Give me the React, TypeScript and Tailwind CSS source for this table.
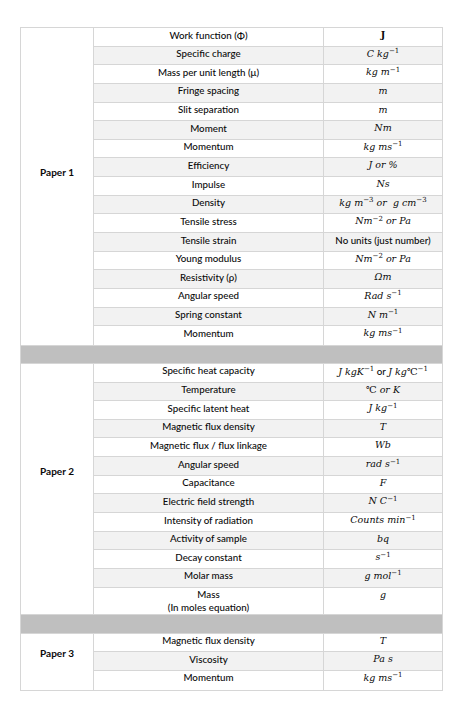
import React from "react";

type Row = { name: React.ReactNode; unit: React.ReactNode; tall?: boolean };

const M = ({ children }: { children: React.ReactNode }) => (
    <span className="font-['DejaVu_Serif',serif] italic">{children}</span>
);

const S = ({ children }: { children: React.ReactNode }) => (
    <sup className="text-[7px] not-italic font-['DejaVu_Serif',serif]">{children}</sup>
);

const paper1: Row[] = [
    { name: "Work function (Φ)", unit: <span className="font-['DejaVu_Serif',serif] font-bold">J</span> },
    { name: "Specific charge", unit: <M>C kg<S>−1</S></M> },
    { name: "Mass per unit length (μ)", unit: <M>kg m<S>−1</S></M> },
    { name: "Fringe spacing", unit: <M>m</M> },
    { name: "Slit separation", unit: <M>m</M> },
    { name: "Moment", unit: <M>Nm</M> },
    { name: "Momentum", unit: <M>kg ms<S>−1</S></M> },
    { name: "Efficiency", unit: <M>J or %</M> },
    { name: "Impulse", unit: <M>Ns</M> },
    { name: "Density", unit: <M>kg m<S>−3</S> or&nbsp; g cm<S>−3</S></M> },
    { name: "Tensile stress", unit: <M>Nm<S>−2</S> or Pa</M> },
    { name: "Tensile strain", unit: <span className="font-['Lato',sans-serif] font-medium text-[9.75px]">No units (just number)</span> },
    { name: "Young modulus", unit: <M>Nm<S>−2</S> or Pa</M> },
    { name: "Resistivity (ρ)", unit: <M>Ωm</M> },
    { name: "Angular speed", unit: <M>Rad s<S>−1</S></M> },
    { name: "Spring constant", unit: <M>N m<S>−1</S></M> },
    { name: "Momentum", unit: <M>kg ms<S>−1</S></M> },
];

const paper2: Row[] = [
    {
        name: "Specific heat capacity",
        unit: (
            <span>
                <M>J kgK<S>−1</S></M> <span className="font-['Lato',sans-serif] font-medium text-[9.75px]">or</span> <M>J kg</M>
                <span className="font-['DejaVu_Serif',serif]">℃<S>−1</S></span>
            </span>
        ),
    },
    {
        name: "Temperature",
        unit: (
            <span>
                <span className="font-['DejaVu_Serif',serif]">℃ </span>
                <M>or K</M>
            </span>
        ),
    },
    { name: "Specific latent heat", unit: <M>J kg<S>−1</S></M> },
    { name: "Magnetic flux density", unit: <M>T</M> },
    { name: "Magnetic flux / flux linkage", unit: <M>Wb</M> },
    { name: "Angular speed", unit: <M>rad s<S>−1</S></M> },
    { name: "Capacitance", unit: <M>F</M> },
    { name: "Electric field strength", unit: <M>N C<S>−1</S></M> },
    { name: "Intensity of radiation", unit: <M>Counts min<S>−1</S></M> },
    { name: "Activity of sample", unit: <M>bq</M> },
    { name: "Decay constant", unit: <M>s<S>−1</S></M> },
    { name: "Molar mass", unit: <M>g mol<S>−1</S></M> },
    {
        name: (
            <>
                Mass
                <br />
                (In moles equation)
            </>
        ),
        unit: <M>g</M>,
        tall: true,
    },
];

const paper3: Row[] = [
    { name: "Magnetic flux density", unit: <M>T</M> },
    { name: "Viscosity", unit: <M>Pa s</M> },
    { name: "Momentum", unit: <M>kg ms<S>−1</S></M> },
];

function Section({ label, rows, pad }: { label: string; rows: Row[]; pad: string }) {
    return (
        <div className="flex border-b border-[#d6d6d6]">
            <div className={`w-[73px] shrink-0 flex items-center justify-center border-r border-[#d6d6d6] font-bold text-[10px] ${pad}`}>
                {label}
            </div>
            <div className="flex-1 flex flex-col">
                {rows.map((r, i) => (
                    <div
                        key={`row_${label}_${i}`}
                        className={`grid grid-cols-[229px_1fr] ${r.tall ? "h-[26px]" : "h-[18.65px]"} ${
                            i < rows.length - 1 ? "border-b border-[#d6d6d6]" : ""
                        } ${i % 2 === 1 ? "bg-[#f2f2f2]" : "bg-white"}`}
                    >
                        <div className="text-center font-medium leading-[12.5px] pt-[0.5px]">{r.name}</div>
                        <div className="text-center border-l border-[#d6d6d6] text-[9.5px] leading-[14px]">{r.unit}</div>
                    </div>
                ))}
            </div>
        </div>
    );
}

export default function App() {
    return (
        <div className="w-[474px] h-[725px] bg-white pt-[27px] pl-[20px] font-['Lato',sans-serif] text-[9.75px] text-[#0a0a0a]">
            <div className="w-[423px] border border-b-0 border-[#d6d6d6]">
                <Section label="Paper 1" rows={paper1} pad="pb-[27px]" />
                <div className="h-[18px] bg-[#bfbfbf] border-b border-[#d6d6d6]" />
                <Section label="Paper 2" rows={paper2} pad="pb-[34px]" />
                <div className="h-[19px] bg-[#bfbfbf] border-b border-[#d6d6d6]" />
                <Section label="Paper 3" rows={paper3} pad="pb-[16px]" />
            </div>
        </div>
    );
}
